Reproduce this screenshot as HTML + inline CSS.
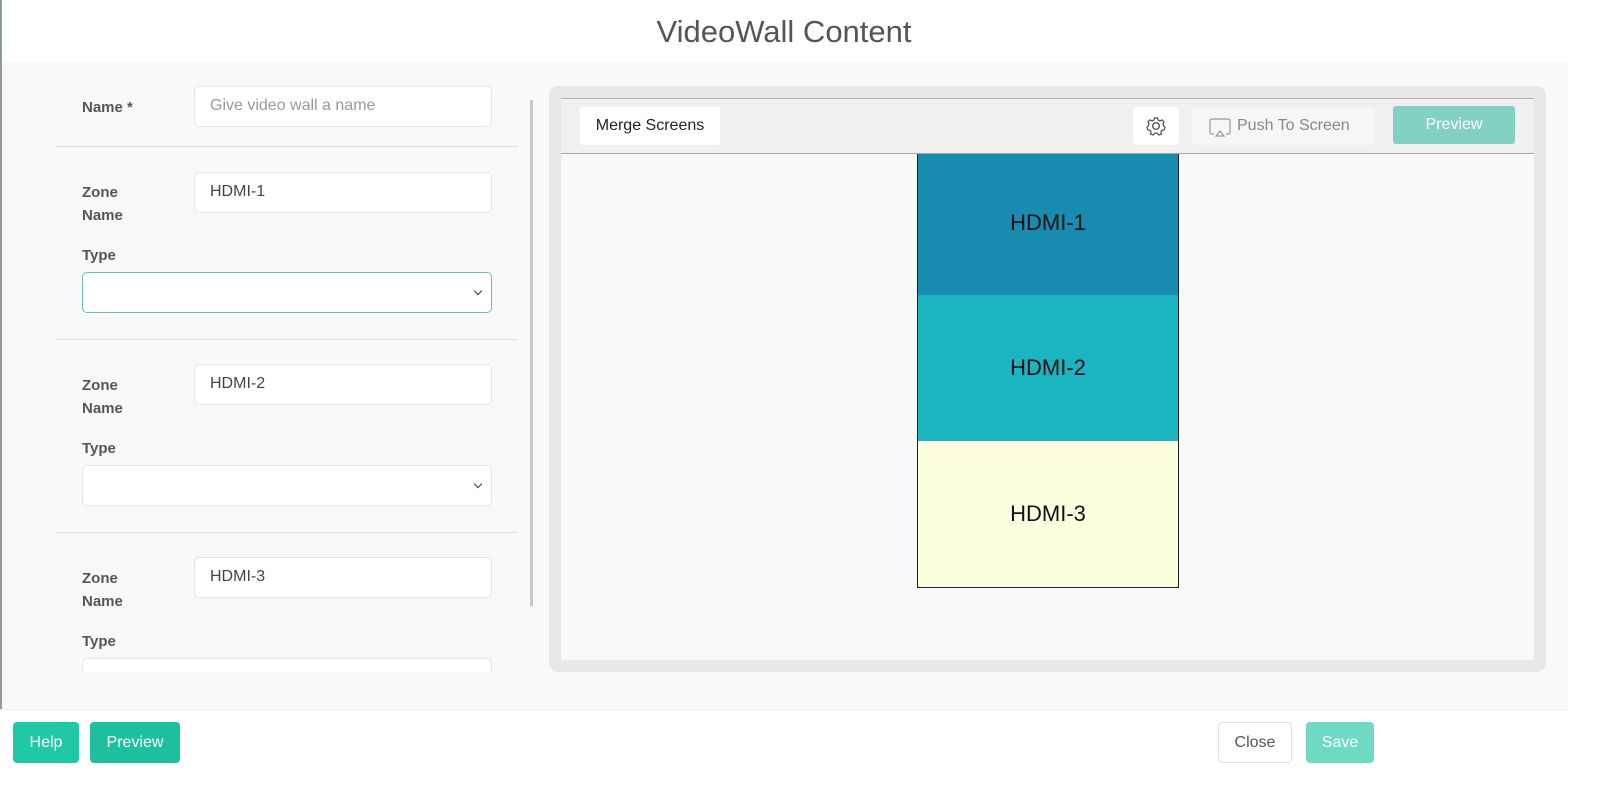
<!DOCTYPE html>
<html><head><style>
*{box-sizing:border-box;margin:0;padding:0}
body{width:1600px;height:797px;background:#fff;font-family:"Liberation Sans",sans-serif;position:relative;overflow:hidden}
.a{position:absolute}
.lbl{position:absolute;left:82px;font-size:15px;font-weight:bold;color:#555;line-height:23px}
.inp{position:absolute;left:194px;width:298px;height:41px;background:#fff;border:1px solid #e3e5e8;border-radius:5px;font-size:16px;color:#444;padding:10px 15px}
.sel{position:absolute;left:82px;width:410px;height:41px;background:#fff;border:1px solid #e3e5e8;border-radius:5px}
.sel:after{content:"";position:absolute;right:10px;top:15px;width:5px;height:5px;border-right:1.5px solid #333;border-bottom:1.5px solid #333;transform:rotate(45deg)}
.hr{position:absolute;left:56px;width:462px;height:1px;background:#dcdcdc}
.blk{position:absolute;left:917px;width:262px;border-left:1px solid #222;border-right:1px solid #222;font-size:22px;color:#111;text-align:center}
.btn{position:absolute;top:722px;height:41px;border-radius:4px;color:#fff;font-size:16px;text-align:center;line-height:41px}
</style></head><body>
<div class="a" style="left:0;top:0;width:1568px;height:62px;background:#fff;border-left:2px solid #8a9a9a"></div>
<div class="a" style="left:0;top:14px;width:1568px;text-align:center;font-size:31px;color:#555">VideoWall Content</div>
<div class="a" style="left:0;top:62px;width:1568px;height:647px;background:#f8f9fa;border-left:2px solid #999"></div>

<div class="lbl" style="top:96px">Name *</div>
<div class="inp" style="top:86px;color:#999">Give video wall a name</div>
<div class="hr" style="top:146px"></div>

<div class="lbl" style="top:181px">Zone<br>Name</div>
<div class="inp" style="top:172px">HDMI-1</div>
<div class="lbl" style="top:244px">Type</div>
<div class="sel" style="top:272px;border-color:#6cbdb0"></div>
<div class="hr" style="top:339px"></div>

<div class="lbl" style="top:374px">Zone<br>Name</div>
<div class="inp" style="top:364px">HDMI-2</div>
<div class="lbl" style="top:437px">Type</div>
<div class="sel" style="top:465px"></div>
<div class="hr" style="top:532px"></div>

<div class="lbl" style="top:567px">Zone<br>Name</div>
<div class="inp" style="top:557px">HDMI-3</div>
<div class="lbl" style="top:630px">Type</div>
<div class="a" style="left:82px;top:658px;width:410px;height:14px;background:#fff;border:1px solid #e3e5e8;border-bottom:none;border-radius:5px 5px 0 0"></div>
<div class="a" style="left:530px;top:100px;width:3px;height:506px;background:#c8c8c8"></div>

<div class="a" style="left:549px;top:86px;width:997px;height:586px;background:#e8e8e8;border-radius:9px"></div>
<div class="a" style="left:561px;top:98px;width:973px;height:562px;background:#f8f9fa"></div>
<div class="a" style="left:561px;top:98px;width:973px;height:56px;background:#f0f0f0;border-top:1px solid #b0b0b0;border-bottom:1px solid #a8a8a8"></div>
<div class="a" style="left:580px;top:107px;width:140px;height:38px;background:#fff;border-radius:3px;font-size:16px;color:#222;text-align:center;line-height:38px">Merge Screens</div>
<div class="a" style="left:1133px;top:107px;width:46px;height:38px;background:#fff;border-radius:3px">
<svg width="46" height="38" viewBox="0 0 46 38"><g transform="translate(23,19)" fill="none" stroke="#555" stroke-width="1.4"><circle r="3.3"/><path d="M-1.6,-9 L1.6,-9 L2.3,-6.6 L4.4,-5.6 L6.7,-6.8 L9,-4.5 L7.7,-2.3 L8.5,-0.2 L10,1.3 L9,4.5 L6.7,4.7 L5.4,6.6 L6.1,9 L3,10 L1.6,8 L-1.6,8 L-3,10 L-6.1,9 L-5.4,6.6 L-6.7,4.7 L-9,4.5 L-10,1.3 L-8.5,-0.2 L-7.7,-2.3 L-9,-4.5 L-6.7,-6.8 L-4.4,-5.6 L-2.3,-6.6 Z" transform="scale(0.9)"/></g></svg></div>
<div class="a" style="left:1192px;top:107px;width:183px;height:38px;background:#f6f6f6;border-radius:3px;font-size:16px;color:#888;line-height:38px;padding-left:45px">Push To Screen</div>
<svg class="a" style="left:1209px;top:118px" width="22" height="20" viewBox="0 0 22 20"><path d="M5 16H2.5a1.5 1.5 0 0 1-1.5-1.5V2.5A1.5 1.5 0 0 1 2.5 1h17A1.5 1.5 0 0 1 21 2.5v12a1.5 1.5 0 0 1-1.5 1.5H17" fill="none" stroke="#999" stroke-width="1.2"/><path d="M11 13l-4 5h8z" fill="none" stroke="#999" stroke-width="1.2"/></svg>
<div class="a" style="left:1393px;top:106px;width:122px;height:38px;background:#83d1c0;border-radius:3px;font-size:16px;color:#fff;text-align:center;line-height:38px">Preview</div>

<div class="blk" style="top:154px;height:141px;background:#1a8bb0;line-height:138px">HDMI-1</div>
<div class="blk" style="top:295px;height:146px;background:#1bb5c1;line-height:146px">HDMI-2</div>
<div class="blk" style="top:441px;height:147px;background:#fdfddf;line-height:146px;border-bottom:1px solid #222">HDMI-3</div>

<div class="a" style="left:0;top:709px;width:1568px;height:1px;background:#eee"></div>
<div class="btn" style="left:13px;width:66px;background:#20c9a6">Help</div>
<div class="btn" style="left:90px;width:90px;background:#1cc09e">Preview</div>
<div class="btn" style="left:1218px;width:74px;background:#fff;border:1px solid #e0e0e0;color:#555;line-height:39px">Close</div>
<div class="btn" style="left:1306px;width:68px;background:#6fdac4">Save</div>
</body></html>
